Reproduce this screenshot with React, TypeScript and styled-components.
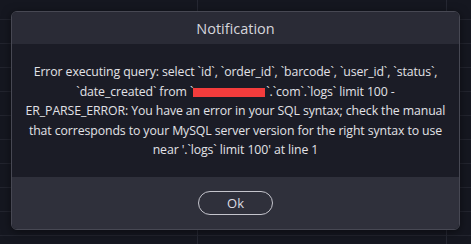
import styled, { createGlobalStyle } from "styled-components";

const GlobalStyle = createGlobalStyle`
  html, body {
    margin: 0;
    padding: 0;
    background: #151720;
  }
  * {
    box-sizing: border-box;
  }
`;

const Backdrop = styled.div`
  width: 471px;
  height: 244px;
  display: flex;
  align-items: flex-start;
  justify-content: center;
  padding-top: 11px;
  background-color: #151720;
  background-image:
    linear-gradient(90deg, transparent 197px, #262833 197px, #262833 198px, transparent 198px),
    linear-gradient(90deg, transparent 446px, #262833 446px, #262833 447px, transparent 447px),
    repeating-linear-gradient(180deg, transparent 0, transparent 18px, #22242e 18px, #22242e 19px, transparent 19px, transparent 24px);
  background-position: 0 0, 0 0, 0 1px;
  font-family: "Open Sans", "Noto Sans", sans-serif;
`;

const Dialog = styled.div`
  width: 449px;
  display: flex;
  flex-direction: column;
  border: 1px solid #474853;
  border-radius: 6px;
  overflow: hidden;
  box-shadow: 0 2px 10px rgba(0, 0, 0, 0.5);
`;

const Header = styled.div`
  height: 32px;
  display: flex;
  align-items: center;
  justify-content: center;
  background: #2a2b36;
  color: #d6d6dc;
  font-size: 14.5px;
`;

const Body = styled.div`
  background: #1b1c26;
  padding: 18px 0 17px;
  display: flex;
  flex-direction: column;
  align-items: center;
  color: #e2e2e6;
  font-size: 12.3px;
  letter-spacing: -0.1px;
  line-height: 19.5px;
`;

const Line = styled.div`
  white-space: nowrap;
`;

const Redacted = styled.span`
  display: inline-block;
  width: 72px;
  height: 9px;
  margin-right: 1px;
  background: #f43c3c;
  vertical-align: -1px;
`;

const Footer = styled.div`
  height: 52px;
  display: flex;
  align-items: center;
  justify-content: center;
  background: #2f303b;
`;

const OkButton = styled.button`
  width: 75px;
  height: 24px;
  border: 1px solid #c4c4cc;
  border-radius: 12px;
  background: transparent;
  color: #dcdce2;
  font-family: inherit;
  font-size: 13px;
  padding: 0;
  cursor: pointer;
`;

export default function App() {
  return (
    <>
      <GlobalStyle />
      <Backdrop>
        <Dialog>
          <Header>Notification</Header>
          <Body>
            <Line>Error executing query: select `id`, `order_id`, `barcode`, `user_id`, `status`,</Line>
            <Line>
              `date_created` from `<Redacted />`.`com`.`logs` limit 100 -
            </Line>
            <Line>ER_PARSE_ERROR: You have an error in your SQL syntax; check the manual</Line>
            <Line>that corresponds to your MySQL server version for the right syntax to use</Line>
            <Line>near '.`logs` limit 100' at line 1</Line>
          </Body>
          <Footer>
            <OkButton>Ok</OkButton>
          </Footer>
        </Dialog>
      </Backdrop>
    </>
  );
}
